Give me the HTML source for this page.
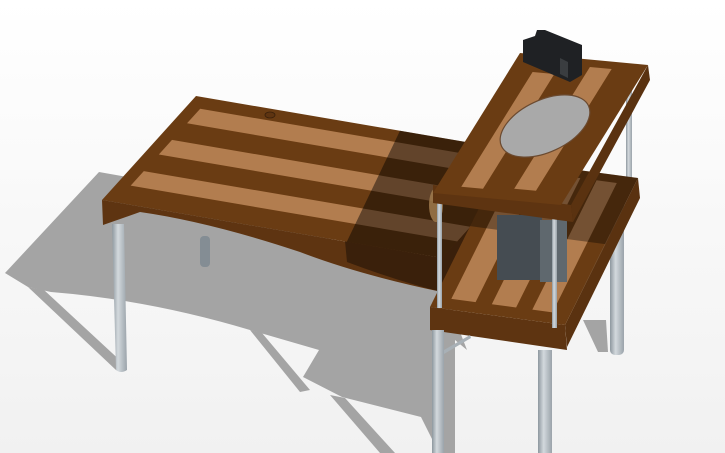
<!DOCTYPE html>
<html><head><meta charset="utf-8"><style>
html,body{margin:0;padding:0;width:725px;height:453px;overflow:hidden;background:#f5f5f5}
svg{display:block}
</style></head><body>
<svg width="725" height="453" viewBox="0 0 725 453" xmlns="http://www.w3.org/2000/svg">
<defs>
<linearGradient id="bg" x1="0" y1="0" x2="0" y2="1"><stop offset="0" stop-color="#ffffff"/><stop offset="1" stop-color="#f1f1f1"/></linearGradient>
<linearGradient id="leg" x1="0" y1="0" x2="1" y2="0"><stop offset="0" stop-color="#8d979e"/><stop offset=".4" stop-color="#d3d9dd"/><stop offset="1" stop-color="#9aa3aa"/></linearGradient>
</defs>
<rect width="725" height="453" fill="url(#bg)"/>
<g fill="#a4a4a4">
<path d="M99,172 L5,273 L28,287 L51,292 Q150,300 250,330 L319,350 L303,377 L342,397 L421,417 L439,453 L455,453 L455,340 L467,350 L440,280 L200,190 Z"/>
<path d="M28,287 L44,290 L125,365 L116,370 Z"/>
<path d="M250,330 L262,333 L310,390 L300,392 Z"/>
<path d="M330,395 L345,398 L395,453 L380,453 Z"/>
<path d="M583,320 L606,320 L608,352 L598,352 Z"/>
</g>
<rect x="200" y="236" width="10" height="31" rx="4" fill="#848d94"/>
<!-- hidden desk part under shelves -->
<path d="M440,200 L505,200 L505,300 L440,300 Z" fill="#3a200b"/>
<path d="M102,200 L442,258 L442,292 Q360,275 300,252 Q210,222 140,212 L103,225 Z" fill="#5e3411"/>
<path d="M345,241 L442,258 L442,292 Q400,282 347,262 Z" fill="#3a200b"/>
<g transform="matrix(340,58,-94,104,196,96)">
<rect x="0" y="0" width="1" height="1" fill="#6a3c13"/>
<rect x="0.04" y="0.1" width="0.96" height="0.14" fill="#b27d4f"/>
<rect x="0.04" y="0.4" width="0.96" height="0.14" fill="#b27d4f"/>
<rect x="0.04" y="0.7" width="0.96" height="0.14" fill="#b27d4f"/>
<path d="M0.6,0 L0.72,1 L1,1 L1,0 Z" fill="#000" opacity="0.45"/>
</g>
<ellipse cx="270" cy="115" rx="5" ry="3" fill="#5e3411" stroke="#3a200b" stroke-width="0.8"/>
<ellipse cx="436" cy="205" rx="7" ry="17" fill="#a07a4e" opacity="0.85"/>
<path d="M112,224 L124,224 L127,370 Q121,374 116,370 Z" fill="url(#leg)"/>
<rect x="610" y="200" width="14" height="155" rx="5" fill="url(#leg)"/>
<rect x="626" y="78" width="6" height="100" fill="url(#leg)"/>
<path d="M638,178 L640,198 L567,347 L565,325 Z" fill="#5a3210"/>
<path d="M430,307 L565,325 L567,350 L430,330 Z" fill="#5e3411"/>
<g transform="matrix(135,18,-73,147,503,160)">
<rect x="0" y="0" width="1" height="1" fill="#6a3c13"/>
<rect x="0.12" y="0.05" width="0.18" height="0.88" fill="#b27d4f"/>
<rect x="0.42" y="0.05" width="0.18" height="0.88" fill="#b27d4f"/>
<rect x="0.72" y="0.05" width="0.15" height="0.88" fill="#b27d4f"/>
<rect x="0" y="0" width="1" height="0.45" fill="#000" opacity="0.35"/>
</g>
<rect x="497" y="215" width="45" height="65" fill="#454c52"/>
<rect x="540" y="220" width="27" height="62" fill="#5f686e"/>
<rect x="437" y="200" width="5" height="108" fill="url(#leg)"/>
<rect x="552" y="218" width="5" height="110" fill="url(#leg)"/>
<rect x="432" y="330" width="12" height="123" fill="url(#leg)"/>
<rect x="538" y="350" width="14" height="103" fill="url(#leg)"/>
<path d="M444,350 L470,335 L471,338 L444,354 Z" fill="#a8b0b6"/>
<path d="M648,65 L650,80 L573,222 L571,205 Z" fill="#5a3210"/>
<path d="M433,185 L571,205 L573,222 L433,203 Z" fill="#5e3411"/>
<g transform="matrix(128,12,-87,140,520,53)">
<rect x="0" y="0" width="1" height="1" fill="#6a3c13"/>
<rect x="0.18" y="0.12" width="0.17" height="0.82" fill="#b27d4f"/>
<rect x="0.58" y="0.05" width="0.17" height="0.87" fill="#b27d4f"/>
</g>
<ellipse cx="545" cy="126" rx="48" ry="26" transform="rotate(-25 545 126)" fill="#a9a9a9" stroke="#6b4a30" stroke-width="1.2"/>
<path d="M523,40 L535,36 L537,30 L545,30 L582,45 L582,75 L570,82 L523,62 Z" fill="#1f2124"/>
<path d="M560,58 L568,62 L568,78 L560,74 Z" fill="#3a3d40"/>
</svg>
</body></html>
